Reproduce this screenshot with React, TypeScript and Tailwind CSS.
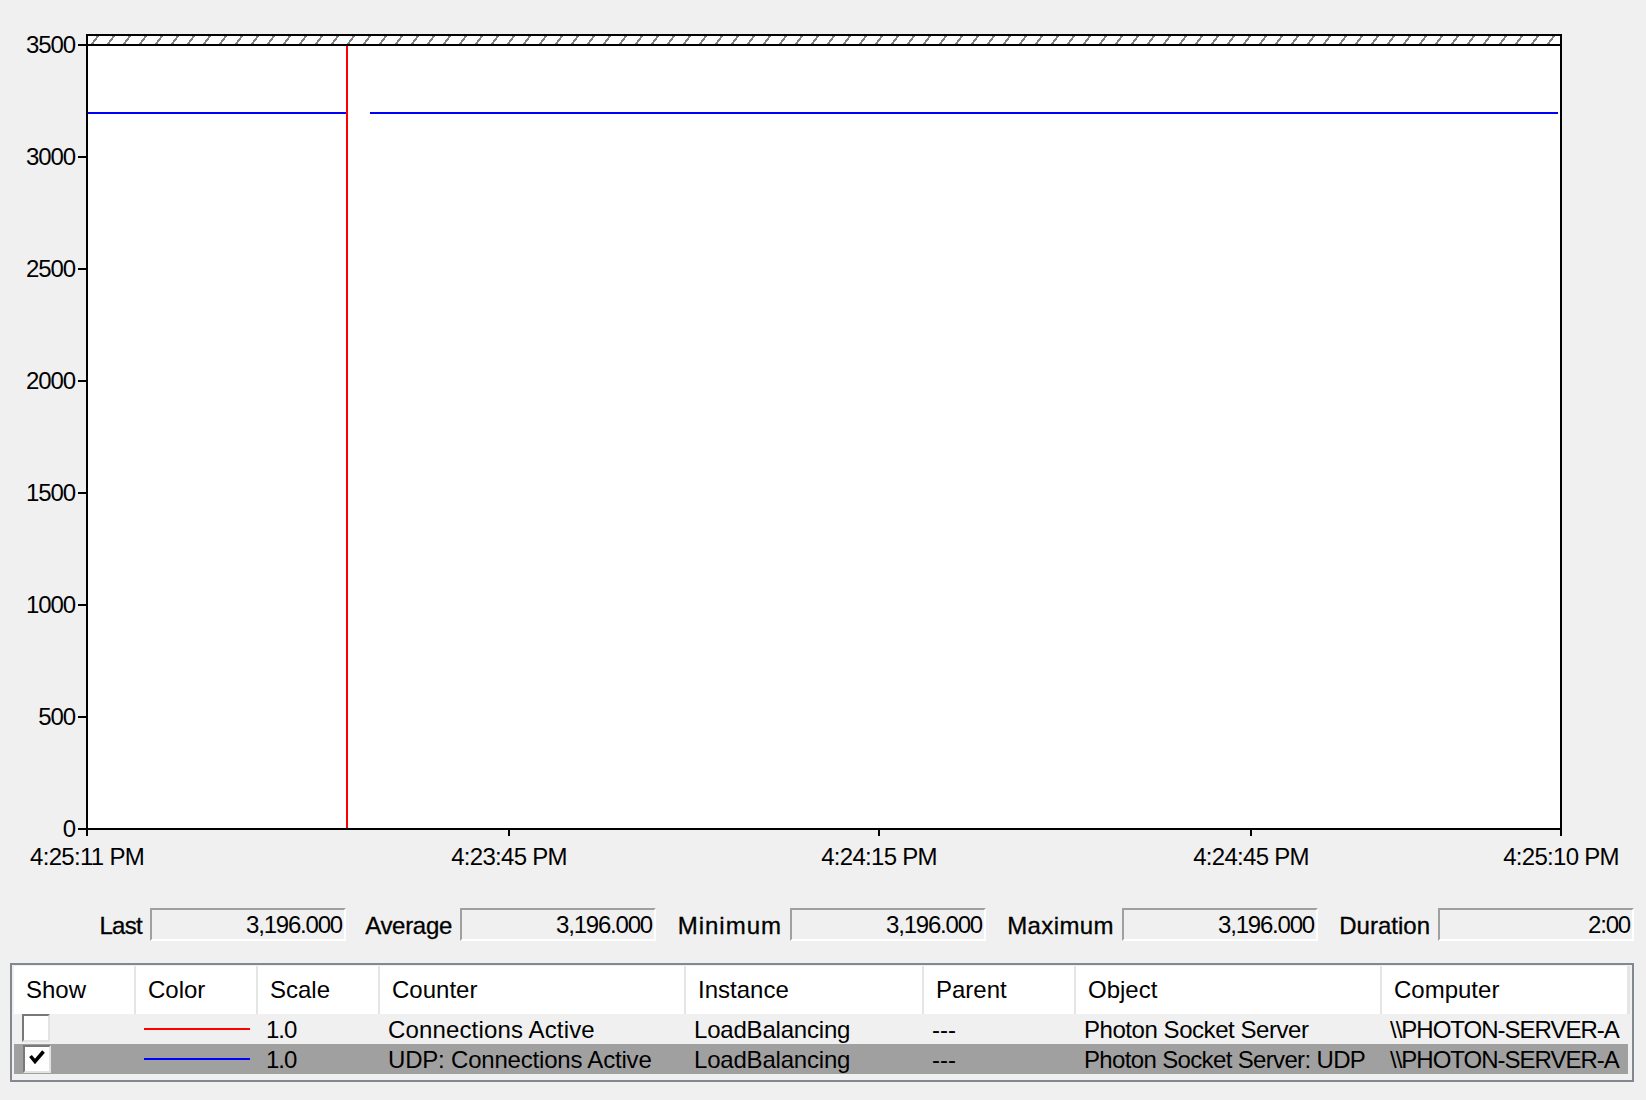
const yTicks = ['3500', '3000', '2500', '2000', '1500', '1000', '500', '0'];

const xTicks = [
  { label: '4:25:11 PM', x: 87 },
  { label: '4:23:45 PM', x: 509 },
  { label: '4:24:15 PM', x: 879 },
  { label: '4:24:45 PM', x: 1251 },
  { label: '4:25:10 PM', x: 1561 },
];

const stats = [
  { label: 'Last', value: '3,196.000', labelW: 'w-[146px]', track: 'tracking-[-0.7px]' },
  { label: 'Average', value: '3,196.000', labelW: 'w-[114px]', track: 'tracking-[-0.3px]' },
  { label: 'Minimum', value: '3,196.000', labelW: 'w-[134px]', track: 'tracking-[1px]' },
  { label: 'Maximum', value: '3,196.000', labelW: 'w-[136px]', track: 'tracking-[0.4px]' },
  { label: 'Duration', value: '2:00', labelW: 'w-[120px]', track: 'tracking-[0px]' },
];

const columns = [
  { name: 'Show', w: 'w-[122px]' },
  { name: 'Color', w: 'w-[122px]' },
  { name: 'Scale', w: 'w-[122px]' },
  { name: 'Counter', w: 'w-[306px]' },
  { name: 'Instance', w: 'w-[238px]' },
  { name: 'Parent', w: 'w-[152px]' },
  { name: 'Object', w: 'w-[306px]' },
];

const rows = [
  {
    checked: false,
    line: 'bg-[#ff0000]',
    scale: '1.0',
    counter: 'Connections Active',
    counterTrack: 'tracking-[0.15px]',
    instance: 'LoadBalancing',
    parent: '---',
    object: 'Photon Socket Server',
    objectTrack: 'tracking-[-0.45px]',
    computer: '\\\\PHOTON-SERVER-A',
  },
  {
    checked: true,
    line: 'bg-[#0000ff]',
    scale: '1.0',
    counter: 'UDP: Connections Active',
    counterTrack: 'tracking-[-0.2px]',
    instance: 'LoadBalancing',
    parent: '---',
    object: 'Photon Socket Server: UDP',
    objectTrack: 'tracking-[-0.65px]',
    computer: '\\\\PHOTON-SERVER-A',
  },
];

function Hatch() {
  return (
    <svg width="1472" height="8" className="block" shapeRendering="crispEdges">
      <defs>
        <pattern id="hatch" width="16" height="8" patternUnits="userSpaceOnUse">
          <path d="M4 8 L10 0" stroke="#808080" strokeWidth="2" fill="none" />
        </pattern>
      </defs>
      <rect width="1472" height="8" fill="url(#hatch)" />
    </svg>
  );
}

export default function App() {
  return (
    <div className="h-[1100px] w-[1646px] overflow-hidden bg-[#f0f0f0] font-['Liberation_Sans',sans-serif] text-[24px] leading-[30px] text-black">
      <div className="relative h-[908px]">
        {/* y axis labels */}
        <div className="absolute left-0 top-[30px] flex h-[814px] w-[75px] flex-col justify-between text-right tracking-[-1.1px]">
          {yTicks.map((t) => (
            <div key={t}>{t}</div>
          ))}
        </div>
        {/* plot */}
        <div className="absolute left-[86px] top-[34px] h-[796px] w-[1476px] border-2 border-black bg-white">
          <Hatch />
          <div className="relative h-[784px] border-t-2 border-black">
            <div className="absolute left-0 top-[66px] h-[2px] w-[258px] bg-[#0000ff]" />
            <div className="absolute left-[282px] top-[66px] h-[2px] w-[1188px] bg-[#0000ff]" />
            <div className="absolute left-[258px] top-0 h-full w-[2px] bg-[#ff0000]" />
          </div>
        </div>
        {yTicks.map((t, i) => (
          <div key={t} className="absolute left-[78px] h-[2px] w-[8px] bg-black" style={{ top: 44 + i * 112 }} />
        ))}
        {xTicks.map((t) => (
          <div key={t.label}>
            <div className="absolute top-[830px] h-[6px] w-[2px] bg-black" style={{ left: t.x - 1 }} />
            <div className="absolute top-[842px] -translate-x-1/2 whitespace-nowrap tracking-[-0.7px]" style={{ left: t.x }}>
              {t.label}
            </div>
          </div>
        ))}
      </div>

      {/* stats */}
      <div className="flex h-[55px] items-start pl-[4px]">
        {stats.map((s) => (
          <div key={s.label} className="flex items-start">
            <div className={`${s.labelW} ${s.track} mt-[3px] pr-[8px] text-right [-webkit-text-stroke:0.3px_#000]`}>
              {s.label}
            </div>
            <div className="h-[33px] w-[196px] border-2 border-b-white border-l-[#a0a0a0] border-r-white border-t-[#a0a0a0] pr-[2px] text-right tracking-[-1.2px]">
              {s.value}
            </div>
          </div>
        ))}
      </div>

      {/* legend table */}
      <div className="ml-[10px] h-[119px] w-[1624px] border-2 border-[#828790] pl-[2px] pr-[4px] pt-[1px]">
        <div className="flex h-[48px] bg-white">
          {columns.map((c) => (
            <div key={c.name} className={`${c.w} h-full shrink-0 border-r-2 border-[#e5e5e5] pl-[12px] pt-[9px]`}>
              {c.name}
            </div>
          ))}
          <div className="w-[244px] shrink-0 pl-[12px] pt-[9px]">Computer</div>
          <div className="ml-[1px] h-full w-[3px] shrink-0 bg-[#e5e5e5]" />
        </div>
        {rows.map((r) => (
          <div key={r.counter} className={`flex h-[30px] whitespace-nowrap ${r.checked ? 'bg-[#a0a0a0]' : ''}`}>
            <div className={`w-[122px] ${r.checked ? 'pl-[9px] pt-[1px]' : 'pl-[8px]'}`}>
              <div className="flex h-[28px] w-[28px] items-center justify-center border-2 border-b-[#e3e3e3] border-l-[#787878] border-r-[#e3e3e3] border-t-[#787878] bg-white">
                {r.checked && (
                  <svg width="16" height="14" viewBox="0 0 16 14" className="-mt-[4px]">
                    <path d="M1.5 6 L6 11.5 L14.5 1.5" stroke="#000" strokeWidth="3.5" fill="none" />
                  </svg>
                )}
              </div>
            </div>
            <div className="flex w-[122px] items-center pl-[8px]">
              <div className={`h-[2px] w-[106px] ${r.line}`} />
            </div>
            <div className="w-[122px] pl-[8px] pt-[1px] tracking-[-1px]">{r.scale}</div>
            <div className={`w-[306px] pl-[8px] pt-[1px] ${r.counterTrack}`}>{r.counter}</div>
            <div className="w-[238px] pl-[8px] pt-[1px] tracking-[-0.2px]">{r.instance}</div>
            <div className="w-[152px] pl-[8px] pt-[1px]">{r.parent}</div>
            <div className={`w-[306px] pl-[8px] pt-[1px] ${r.objectTrack}`}>{r.object}</div>
            <div className="w-[244px] pl-[8px] pt-[1px] tracking-[-1px]">{r.computer}</div>
          </div>
        ))}
      </div>
    </div>
  );
}
